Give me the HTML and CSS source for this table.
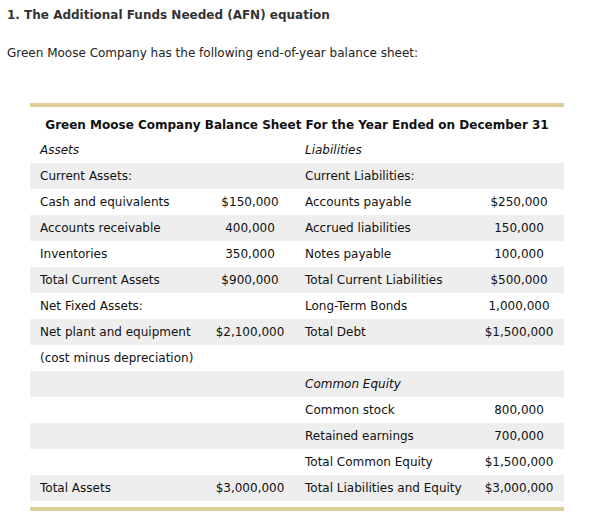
FILE: index.html
```html
<!DOCTYPE html>
<html>
<head>
<meta charset="utf-8">
<link rel="stylesheet" href="styles.css">
</head>
<body>
<h1 class="title">1. The Additional Funds Needed (AFN) equation</h1>
<p class="intro">Green Moose Company has the following end-of-year balance sheet:</p>
<div class="sheet">
  <table class="bs">
    <colgroup>
      <col class="c1"><col class="c2"><col class="c3"><col class="c4">
    </colgroup>
    <tr class="cap"><th colspan="4">Green Moose Company Balance Sheet For the Year Ended on December 31</th></tr>
    <tr><td class="it">Assets</td><td></td><td class="it">Liabilities</td><td></td></tr>
    <tr class="sh"><td>Current Assets:</td><td></td><td>Current Liabilities:</td><td></td></tr>
    <tr><td>Cash and equivalents</td><td class="n">$150,000</td><td>Accounts payable</td><td class="n">$250,000</td></tr>
    <tr class="sh"><td>Accounts receivable</td><td class="n">400,000</td><td>Accrued liabilities</td><td class="n">150,000</td></tr>
    <tr><td>Inventories</td><td class="n">350,000</td><td>Notes payable</td><td class="n">100,000</td></tr>
    <tr class="sh"><td>Total Current Assets</td><td class="n">$900,000</td><td>Total Current Liabilities</td><td class="n">$500,000</td></tr>
    <tr><td>Net Fixed Assets:</td><td></td><td>Long-Term Bonds</td><td class="n">1,000,000</td></tr>
    <tr class="sh"><td>Net plant and equipment</td><td class="n">$2,100,000</td><td>Total Debt</td><td class="n">$1,500,000</td></tr>
    <tr><td>(cost minus depreciation)</td><td></td><td></td><td></td></tr>
    <tr class="sh"><td></td><td></td><td class="it">Common Equity</td><td></td></tr>
    <tr><td></td><td></td><td>Common stock</td><td class="n">800,000</td></tr>
    <tr class="sh"><td></td><td></td><td>Retained earnings</td><td class="n">700,000</td></tr>
    <tr><td></td><td></td><td>Total Common Equity</td><td class="n">$1,500,000</td></tr>
    <tr class="sh"><td>Total Assets</td><td class="n">$3,000,000</td><td>Total Liabilities and Equity</td><td class="n">$3,000,000</td></tr>
  </table>
</div>
<div class="shade"></div>
</body>
</html>
```
FILE: styles.css
```css
html, body {
  margin: 0;
  padding: 0;
  background: #fff;
}
body {
  font-family: "DejaVu Sans", Verdana, sans-serif;
  font-size: 12px;
  color: #222;
  width: 601px;
  height: 531px;
  overflow: hidden;
  position: relative;
}
.title {
  margin: 0;
  padding: 7px 0 0 7px;
  font-size: 12px;
  line-height: 16px;
  font-weight: bold;
  color: #333;
}
.intro {
  margin: 22px 0 0 0;
  padding-left: 7px;
  line-height: 16px;
  color: #222;
}
.sheet {
  margin: 42px 0 0 30px;
  width: 534px;
  border-top: 4px solid #dbcd98;
  border-bottom: 4px solid #dbcd98;
  padding-bottom: 6px;
}
.bs {
  width: 534px;
  border-collapse: collapse;
  table-layout: fixed;
  color: #111;
}
.c1 { width: 175px; }
.c2 { width: 90px; }
.c3 { width: 179px; }
.c4 { width: 90px; }
.bs td {
  height: 26px;
  padding: 0 10px;
  line-height: 16px;
  white-space: nowrap;
  box-sizing: border-box;
}
.bs td.n {
  padding: 0;
  text-align: center;
}
.bs td.it {
  font-style: italic;
}
.bs tr.sh td {
  background: #eeeeee;
}
.bs .cap th {
  padding: 10px 0 4px;
  line-height: 16px;
  font-weight: bold;
  text-align: center;
  white-space: nowrap;
  color: #111;
}
.shade {
  position: absolute;
  left: 0;
  right: 0;
  top: 511px;
  height: 20px;
  background: linear-gradient(#ffffff, #f3f3f3);
  z-index: -1;
}
```
